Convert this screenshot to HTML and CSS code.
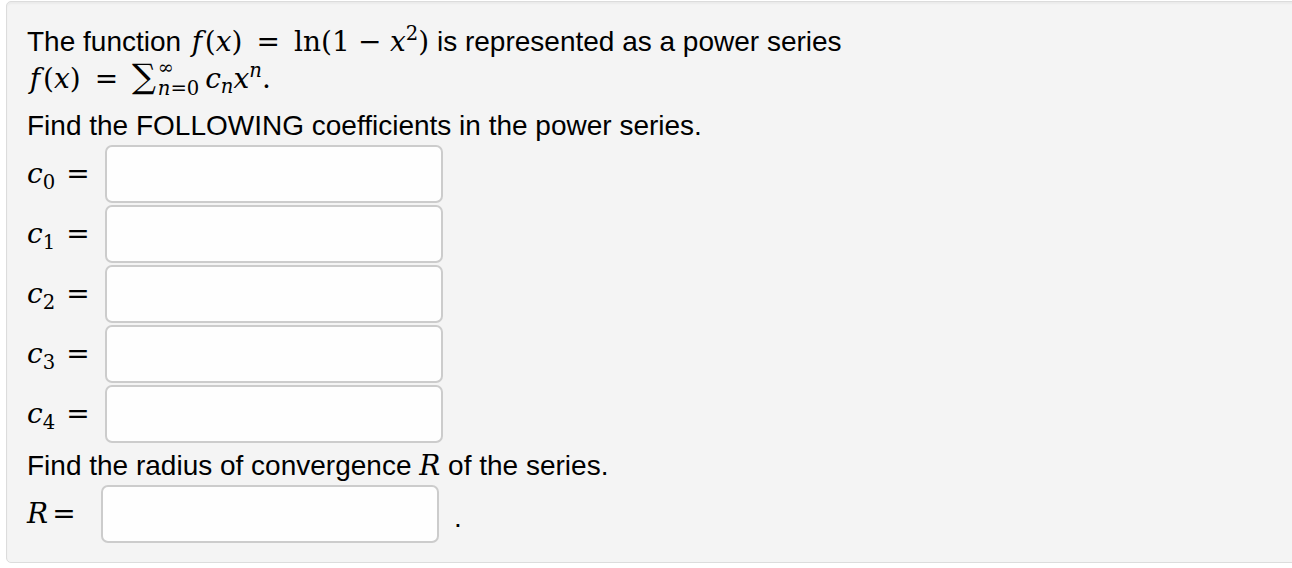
FILE: index.html
```html
<!DOCTYPE html>
<html lang="en">
<head>
<meta charset="utf-8">
<title>Power series</title>
<link rel="stylesheet" href="styles.css">
</head>
<body>
<div class="panel">
  <p class="intro">The function <span class="m"><i class="fi">f</i>(<i>x</i>)<span class="rel">=</span>ln(1<span class="bin">−</span><i>x</i><sup>2</sup>)</span> is represented as a power series<br><span class="m"><i class="fi">f</i>(<i>x</i>)<span class="rel">=</span><span class="sum">∑</span><span class="lim"><span class="up">∞</span><span class="dn"><i>n</i>=0</span></span><i class="cn">c</i><sub><i>n</i></sub><i>x</i><sup><i>n</i></sup>.</span></p>
  <p class="q">Find the FOLLOWING coefficients in the power series.</p>
  <div class="row"><span class="m lbl"><i>c</i><sub>0</sub><span class="rel">=</span></span><input class="ans" type="text" aria-label="c0"></div>
  <div class="row"><span class="m lbl"><i>c</i><sub>1</sub><span class="rel">=</span></span><input class="ans" type="text" aria-label="c1"></div>
  <div class="row"><span class="m lbl"><i>c</i><sub>2</sub><span class="rel">=</span></span><input class="ans" type="text" aria-label="c2"></div>
  <div class="row"><span class="m lbl"><i>c</i><sub>3</sub><span class="rel">=</span></span><input class="ans" type="text" aria-label="c3"></div>
  <div class="row"><span class="m lbl"><i>c</i><sub>4</sub><span class="rel">=</span></span><input class="ans" type="text" aria-label="c4"></div>
  <p class="q q2">Find the radius of convergence <span class="m"><i>R</i></span> of the series.</p>
  <div class="row rrow"><span class="m lbl rl"><i>R</i><span class="rel r">=</span></span><input class="ans" type="text" aria-label="R"><span class="dot">.</span></div>
</div>
</body>
</html>
```
FILE: styles.css
```css
html, body {
  margin: 0;
  padding: 0;
  background: #ffffff;
  overflow: hidden;
}
body {
  font-family: "Liberation Sans", Arial, Helvetica, sans-serif;
  font-size: 28px;
  color: #000;
}
.panel {
  margin: 1px -30px 0 6px;
  background: #f4f4f4;
  border: 1px solid #dcdcdc;
  border-radius: 5px;
  padding: 21px 20px 18px 20px;
  box-shadow: inset 0 2px 2px rgba(0,0,0,0.04);
}
p {
  margin: 0;
  line-height: 37px;
}
.intro {
  margin-bottom: 10px;
}
.q2 {
  margin-top: 3px;
}
.m {
  font-family: "DejaVu Serif", "Liberation Serif", serif;
  font-size: 28px;
  line-height: 20px;
}
.m i {
  font-style: italic;
}
.fi {
  margin: 0 0.1em 0 0.1em;
}
.m sup, .m sub {
  font-size: 0.7em;
  line-height: 0;
}
.m sup { vertical-align: 0.55em; }
.m sub { vertical-align: -0.25em; }
.rel {
  margin: 0 0.5em;
}
.bin {
  margin: 0 0.3em;
}
.sum {
  font-size: 1.2em;
  margin-right: 0.05em;
}
.lim {
  display: inline-flex;
  flex-direction: column;
  font-size: 0.7em;
  line-height: 1.05;
  vertical-align: 0.7em;
  margin: -10px 0.3em -10px 0;
}
.row {
  display: flex;
  align-items: center;
  height: 60px;
}
.lbl {
  display: inline-block;
  width: 78px;
  line-height: 1;
}
.lbl sub {
  vertical-align: -0.3em;
}
.lbl .rel {
  margin: 0 0 0 0.4em;
}
.rl {
  width: 74px;
}
.lbl .r {
  margin-left: 0.15em;
}
.ans {
  box-sizing: border-box;
  width: 338px;
  height: 58px;
  margin: 0;
  border: 2px solid #cccccc;
  border-radius: 7px;
  background: #fefefe;
  padding: 0 10px;
  font-size: 20px;
  outline: none;
}
.dot {
  margin-left: 15px;
  line-height: 1;
  padding-top: 8px;
}
```
